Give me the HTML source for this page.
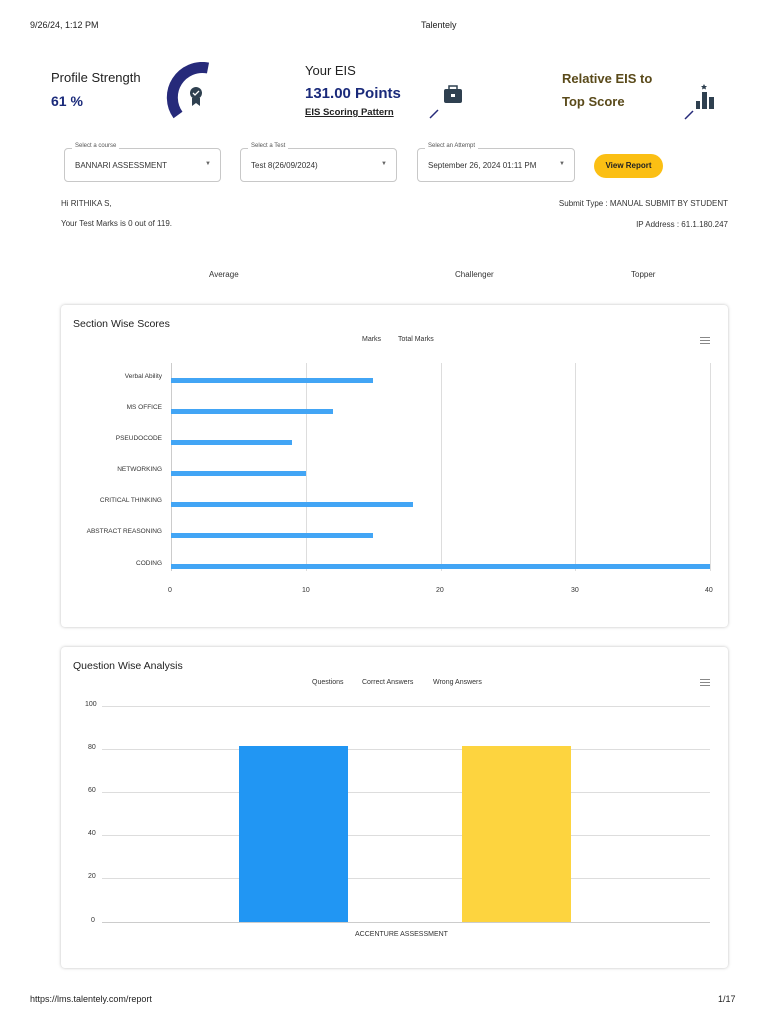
<!DOCTYPE html>
<html><head><meta charset="utf-8"><style>
*{margin:0;padding:0;box-sizing:border-box}
body{width:768px;height:1024px;background:#fff;font-family:"Liberation Sans",sans-serif;position:relative;overflow:hidden;color:#222}
.a{position:absolute;white-space:nowrap}
.card{position:absolute;background:#fff;border-radius:4px;box-shadow:0 0 3px rgba(0,0,0,.25)}
.sel{position:absolute;border:1px solid #c8c8c8;border-radius:4px;height:34px;font-size:8px;color:#333}
.sel .l{position:absolute;top:-6px;left:7px;background:#fff;padding:0 3px;font-size:6px;color:#555}
.sel .v{position:absolute;top:12px;left:10px}
.sel .c{position:absolute;top:12px;right:9px;font-size:6px;color:#666}
.gl{position:absolute;width:1px;background:#ddd}
.hl{position:absolute;height:1px;background:#ddd}
.bar{position:absolute;height:5px;background:#42a5f5}
.yl{position:absolute;font-size:6.5px;color:#333;text-align:right;width:100px}
.t6{font-size:7px;color:#333}
.hb{position:absolute;width:10px;height:7px;border-top:1px solid #888;border-bottom:1px solid #888}
.hb:after{content:"";position:absolute;left:0;right:0;top:2px;height:1px;background:#888}
</style></head><body>
<div class="a" style="left:30px;top:20px;font-size:9px">9/26/24, 1:12 PM</div>
<div class="a" style="left:421px;top:20px;font-size:9px">Talentely</div>
<div class="a" style="left:30px;top:994px;font-size:9px">https://lms.talentely.com/report</div>
<div class="a" style="left:718px;top:994px;font-size:9px">1/17</div>

<div class="a" style="left:51px;top:70px;font-size:13px">Profile Strength</div>
<div class="a" style="left:51px;top:93px;font-size:14px;color:#1a2a7a;font-weight:bold">61 %</div>
<svg class="a" style="left:160px;top:62px" width="56" height="58"><path d="M48 6 A30 30 0 0 0 18 53" fill="none" stroke="#262a7a" stroke-width="11"/><circle cx="36" cy="31" r="6" fill="#2f4050"/><path d="M32 36 L32 44 L36 41 L40 44 L40 36" fill="#2f4050"/><path d="M33 31 l2 2 l4 -4" stroke="#fff" stroke-width="1.3" fill="none"/></svg>

<div class="a" style="left:305px;top:63px;font-size:13px">Your EIS</div>
<div class="a" style="left:305px;top:85px;font-size:15px;color:#1a2a7a;font-weight:bold">131.00 Points</div>
<div class="a" style="left:305px;top:107px;font-size:9.5px;font-weight:bold;text-decoration:underline">EIS Scoring Pattern</div>
<svg class="a" style="left:428px;top:85px" width="36" height="36"><rect x="16" y="4" width="18" height="14" rx="2" fill="#2f4050"/><rect x="21" y="1" width="8" height="4" fill="none" stroke="#2f4050" stroke-width="1.5"/><rect x="23" y="9" width="4" height="3" fill="#fff"/><line x1="2" y1="33" x2="10" y2="25" stroke="#262a7a" stroke-width="1.5"/></svg>

<div class="a" style="left:562px;top:71px;font-size:13px;color:#5a4a1a;font-weight:bold">Relative EIS to</div>
<div class="a" style="left:562px;top:94px;font-size:13px;color:#5a4a1a;font-weight:bold">Top Score</div>
<svg class="a" style="left:683px;top:82px" width="40" height="40"><path d="M21 2 l1 2 2 0 -1.5 1.5 .5 2 -2 -1 -2 1 .5 -2 -1.5 -1.5 2 0z" fill="#2f4050"/><rect x="19" y="10" width="5" height="17" fill="#2f4050"/><rect x="13" y="19" width="4" height="8" fill="#2f4050"/><rect x="26" y="15" width="5" height="12" fill="#2f4050"/><line x1="2" y1="37" x2="10" y2="29" stroke="#262a7a" stroke-width="1.5"/></svg>

<div class="sel" style="left:64px;top:148px;width:157px"><span class="l">Select a course</span><span class="v">BANNARI ASSESSMENT</span><span class="c">▼</span></div>
<div class="sel" style="left:240px;top:148px;width:157px"><span class="l">Select a Test</span><span class="v">Test 8(26/09/2024)</span><span class="c">▼</span></div>
<div class="sel" style="left:417px;top:148px;width:158px"><span class="l">Select an Attempt</span><span class="v">September 26, 2024 01:11 PM</span><span class="c">▼</span></div>
<div class="a" style="left:594px;top:154px;width:69px;height:24px;border-radius:12px;background:#fbbf14;font-size:8px;font-weight:bold;text-align:center;line-height:24px">View Report</div>

<div class="a t6" style="left:61px;top:199px;font-size:8px">Hi RITHIKA S,</div>
<div class="a t6" style="left:61px;top:219px;font-size:8px">Your Test Marks is 0 out of 119.</div>
<div class="a t6" style="right:40px;top:199px;font-size:8px">Submit Type : MANUAL SUBMIT BY STUDENT</div>
<div class="a t6" style="right:40px;top:220px;font-size:8px">IP Address : 61.1.180.247</div>

<div class="a t6" style="left:209px;top:270px;font-size:8px">Average</div>
<div class="a t6" style="left:455px;top:270px;font-size:8px">Challenger</div>
<div class="a t6" style="left:631px;top:270px;font-size:8px">Topper</div>

<div class="card" style="left:61px;top:305px;width:667px;height:322px"></div>
<div class="a" style="left:73px;top:318px;font-size:10.5px">Section Wise Scores</div>
<div class="a t6" style="left:362px;top:336px">Marks</div>
<div class="a t6" style="left:398px;top:336px">Total Marks</div>
<div class="hb" style="left:700px;top:337px"></div>
<div class="gl" style="left:171px;top:363px;height:208px;background:#ccc"></div>
<div class="gl" style="left:306px;top:363px;height:208px"></div>
<div class="gl" style="left:441px;top:363px;height:208px"></div>
<div class="gl" style="left:575px;top:363px;height:208px"></div>
<div class="gl" style="left:710px;top:363px;height:208px"></div>
<div class="yl" style="left:62px;top:373px">Verbal Ability</div>
<div class="yl" style="left:62px;top:404px">MS OFFICE</div>
<div class="yl" style="left:62px;top:435px">PSEUDOCODE</div>
<div class="yl" style="left:62px;top:466px">NETWORKING</div>
<div class="yl" style="left:62px;top:497px">CRITICAL THINKING</div>
<div class="yl" style="left:62px;top:528px">ABSTRACT REASONING</div>
<div class="yl" style="left:62px;top:560px">CODING</div>
<div class="bar" style="left:171px;top:378px;width:202px"></div>
<div class="bar" style="left:171px;top:409px;width:162px"></div>
<div class="bar" style="left:171px;top:440px;width:121px"></div>
<div class="bar" style="left:171px;top:471px;width:135px"></div>
<div class="bar" style="left:171px;top:502px;width:242px"></div>
<div class="bar" style="left:171px;top:533px;width:202px"></div>
<div class="bar" style="left:171px;top:564px;width:539px"></div>
<div class="a t6" style="left:168px;top:587px">0</div>
<div class="a t6" style="left:302px;top:587px">10</div>
<div class="a t6" style="left:436px;top:587px">20</div>
<div class="a t6" style="left:571px;top:587px">30</div>
<div class="a t6" style="left:705px;top:587px">40</div>

<div class="card" style="left:61px;top:647px;width:667px;height:321px"></div>
<div class="a" style="left:73px;top:660px;font-size:10.5px">Question Wise Analysis</div>
<div class="a t6" style="left:312px;top:679px">Questions</div>
<div class="a t6" style="left:362px;top:679px">Correct Answers</div>
<div class="a t6" style="left:433px;top:679px">Wrong Answers</div>
<div class="hb" style="left:700px;top:679px"></div>
<div class="hl" style="left:102px;top:706px;width:608px"></div>
<div class="hl" style="left:102px;top:749px;width:608px"></div>
<div class="hl" style="left:102px;top:792px;width:608px"></div>
<div class="hl" style="left:102px;top:835px;width:608px"></div>
<div class="hl" style="left:102px;top:878px;width:608px"></div>
<div class="hl" style="left:102px;top:922px;width:608px;background:#ccc"></div>
<div class="a t6" style="left:85px;top:701px">100</div>
<div class="a t6" style="left:88px;top:744px">80</div>
<div class="a t6" style="left:88px;top:787px">60</div>
<div class="a t6" style="left:88px;top:830px">40</div>
<div class="a t6" style="left:88px;top:873px">20</div>
<div class="a t6" style="left:91px;top:917px">0</div>
<div class="a" style="left:239px;top:746px;width:109px;height:176px;background:#2196f3"></div>
<div class="a" style="left:462px;top:746px;width:109px;height:176px;background:#fdd43f"></div>
<div class="a t6" style="left:355px;top:931px">ACCENTURE ASSESSMENT</div>
</body></html>
